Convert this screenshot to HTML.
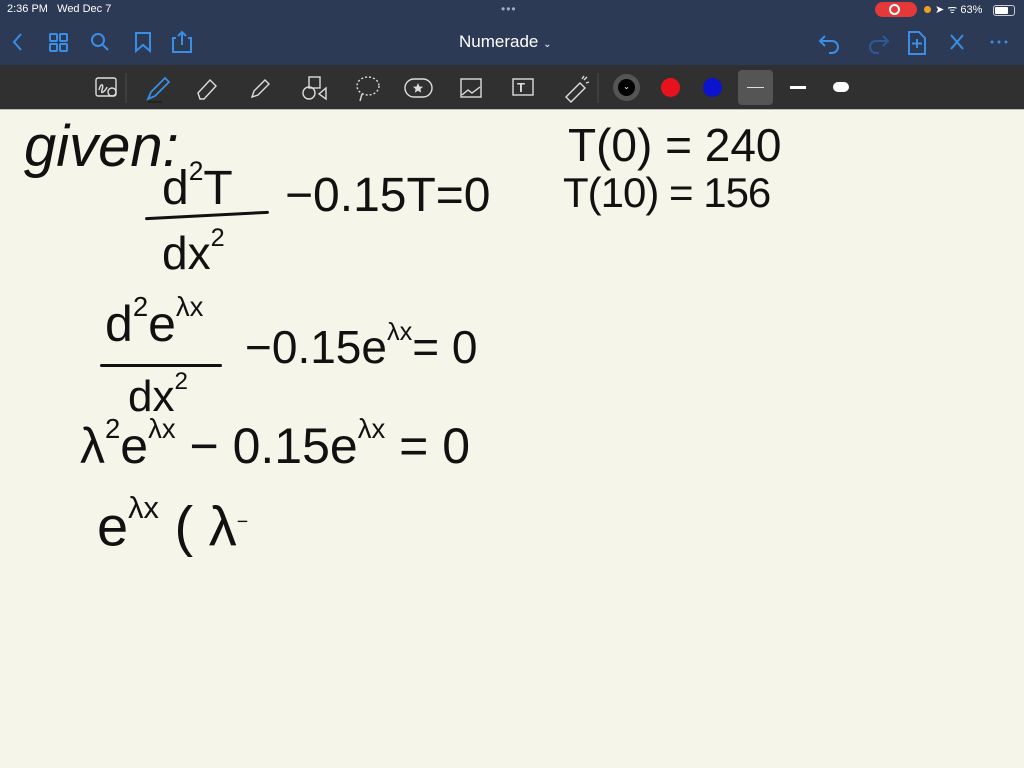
<!DOCTYPE html>
<html><head><meta charset="utf-8"><style>
*{margin:0;padding:0;box-sizing:border-box}
body{width:1024px;height:768px;overflow:hidden;background:#f6f5ea;font-family:"Liberation Sans",sans-serif;position:relative}
#top{position:absolute;left:0;top:0;width:1024px;height:65px;background:#2c3a55}
#tb{position:absolute;left:0;top:65px;width:1024px;height:45px;background:#303030;border-bottom:1px solid #bbb}
.a{position:absolute;white-space:nowrap}
.h{position:absolute;white-space:nowrap;color:#111;font-family:"Liberation Sans",sans-serif;line-height:1}
sup{font-size:55%;vertical-align:0.9em}
.fl{position:absolute;height:3px;background:#111;border-radius:2px}
</style></head><body>
<div id="top">
<div class="a" style="left:7px;top:3px;font-size:11px;color:#fff">2:36 PM&nbsp;&nbsp;&nbsp;Wed Dec 7</div>
<div class="a" style="left:501px;top:2px;font-size:12px;color:#aab;letter-spacing:1px">•••</div>
<div class="a" style="left:875px;top:2px;width:42px;height:15px;border-radius:8px;background:#e53838"></div>
<div class="a" style="left:889px;top:4px;width:11px;height:11px;border-radius:50%;border:2px solid #fff"></div>
<div class="a" style="left:924px;top:6px;width:7px;height:7px;border-radius:50%;background:#f0a020"></div>
<div class="a" style="left:935px;top:2px;font-size:11px;color:#fff">➤ ᯤ 63%</div>
<div class="a" style="left:993px;top:5px;width:22px;height:11px;border:1px solid #ccc;border-radius:3px"><div style="width:13px;height:7px;margin:1px;background:#fff;border-radius:1px"></div></div>
<svg class="a" style="left:0;top:26px" width="200" height="32" fill="none" stroke="#3a8ee6" stroke-width="2">
<path d="M21 8l-7 8 7 8"/>
<rect x="50" y="8" width="7" height="7" rx="1"/><rect x="60" y="8" width="7" height="7" rx="1"/><rect x="50" y="18" width="7" height="7" rx="1"/><rect x="60" y="18" width="7" height="7" rx="1"/>
<circle cx="98" cy="14" r="6"/><path d="M103 19l5 5"/>
<path d="M136 7h14v18l-7-6-7 6z"/>
<path d="M176 12h-3v14h18v-14h-3M182 19v-13M178 10l4-4 4 4"/>
</svg>
<div class="a" style="left:459px;top:32px;font-size:17px;color:#fff">Numerade <span style="font-size:10px">⌄</span></div>
<svg class="a" style="left:815px;top:26px" width="205" height="32" fill="none" stroke-width="2">
<path d="M10 10l-5 5 5 5M5 15h12a6 6 0 010 12h-3" stroke="#3a8ee6"/>
<path d="M68 10l5 5-5 5M73 15h-12a6 6 0 000 12h3" stroke="#2b5a9a"/>
<path d="M94 6h10l6 6v16h-16z M102 13v9M97 17.5h10" stroke="#3a8ee6"/>
<path d="M136 9l12 14M148 9l-12 14" stroke="#3a8ee6"/>
<circle cx="177" cy="16" r="1.5" fill="#3a8ee6" stroke="none"/><circle cx="184" cy="16" r="1.5" fill="#3a8ee6" stroke="none"/><circle cx="191" cy="16" r="1.5" fill="#3a8ee6" stroke="none"/>
</svg>
</div>
<div id="tb">
<svg class="a" style="left:0;top:0" width="1024" height="45" fill="none" stroke="#ddd" stroke-width="1.4">
<rect x="96" y="13" width="20" height="18" rx="2"/><circle cx="112" cy="27" r="4"/><path d="M99 25c2-8 5-6 3 0s4 0 5-3"/>
<line x1="126" y1="8" x2="126" y2="38" stroke="#444"/>
<path d="M148 34l3-7 14-14 4 4-14 14z" stroke="#3a8ee6" stroke-width="1.8"/><path d="M148 37h14" stroke="#222" stroke-width="2"/>
<path d="M198 28l12-13 6 6-12 13h-4z"/>
<path d="M252 32l2-6 11-11 4 4-11 11z"/>
<rect x="309" y="12" width="11" height="11"/><circle cx="309" cy="28" r="6"/><path d="M326 23v11l-7-5z"/>
<ellipse cx="368" cy="21" rx="11" ry="9" stroke-dasharray="2 2"/><path d="M362 29l-2 7"/>
<rect x="405" y="14" width="27" height="18" rx="9"/><path d="M418 18l1.5 3.5 3.5.3-2.6 2.3.8 3.5-3.2-1.9-3.2 1.9.8-3.5-2.6-2.3 3.5-.3z" fill="#ddd" stroke="none"/>
<rect x="461" y="14" width="20" height="18"/><path d="M462 30l6-5 4 3 8-6"/>
<rect x="513" y="14" width="20" height="16"/>
<path d="M566 32l14-14 5 5-14 14z M582 14l2-3M586 18l3-1M584 15l3-3"/>
<line x1="598" y1="8" x2="598" y2="38" stroke="#444"/>
</svg>
<div class="a" style="left:517px;top:15px;font-size:13px;color:#ddd;font-weight:bold">T</div>
<div class="a" style="left:613px;top:9px;width:27px;height:27px;border-radius:50%;background:#555"></div>
<div class="a" style="left:618px;top:14px;width:17px;height:17px;border-radius:50%;background:#000;color:#fff;font-size:8px;text-align:center;line-height:16px">⌄</div>
<div class="a" style="left:661px;top:13px;width:19px;height:19px;border-radius:50%;background:#e8121f"></div>
<div class="a" style="left:703px;top:13px;width:19px;height:19px;border-radius:50%;background:#0a14cc"></div>
<div class="a" style="left:738px;top:5px;width:35px;height:35px;border-radius:4px;background:#555"></div>
<div class="a" style="left:747px;top:22px;width:17px;height:1px;background:#ddd"></div>
<div class="a" style="left:790px;top:21px;width:16px;height:3px;background:#fff"></div>
<div class="a" style="left:833px;top:17px;width:16px;height:10px;border-radius:5px;background:#fff"></div>
</div>

<div class="h" style="left:24px;top:118px;font-size:58px;font-style:italic">given:</div>
<div class="h" style="left:162px;top:158px;font-size:48px">d<sup>2</sup>T</div>
<div class="fl" style="left:145px;top:214px;width:124px;transform:rotate(-3deg)"></div>
<div class="h" style="left:162px;top:226px;font-size:46px">dx<sup>2</sup></div>
<div class="h" style="left:285px;top:172px;font-size:48px">−0.15T=0</div>
<div class="h" style="left:568px;top:122px;font-size:46px">T(0) = 240</div>
<div class="h" style="left:563px;top:172px;font-size:42px;letter-spacing:-1px">T(10) = 156</div>

<div class="h" style="left:105px;top:293px;font-size:50px">d<sup>2</sup>e<sup>λx</sup></div>
<div class="fl" style="left:100px;top:364px;width:122px"></div>
<div class="h" style="left:128px;top:370px;font-size:44px">dx<sup>2</sup></div>
<div class="h" style="left:245px;top:320px;font-size:46px">−0.15e<sup>λx</sup>= 0</div>

<div class="h" style="left:80px;top:415px;font-size:50px">λ<sup>2</sup>e<sup>λx</sup> − 0.15e<sup>λx</sup> = 0</div>
<div class="h" style="left:97px;top:493px;font-size:56px">e<sup>λx</sup> ( λ<sup style="font-size:35%">−</sup></div>
</body></html>
